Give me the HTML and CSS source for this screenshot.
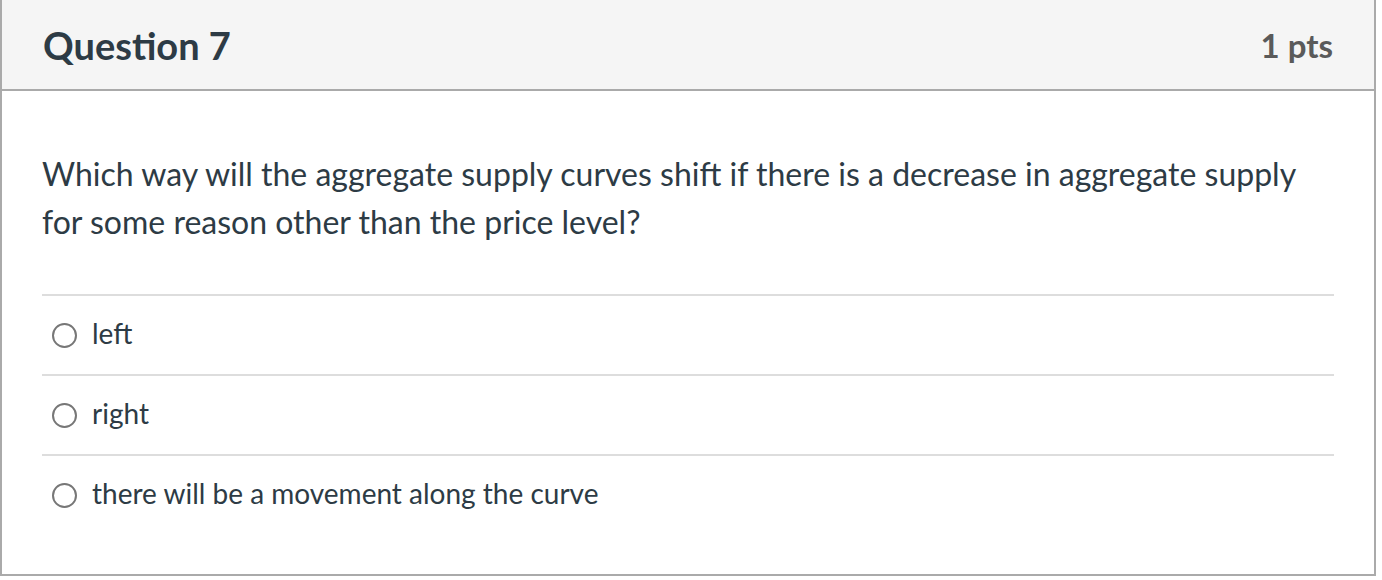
FILE: index.html
```html
<!DOCTYPE html>
<html lang="en">
<head>
<meta charset="utf-8">
<title>Question 7</title>
<link rel="stylesheet" href="styles.css">
</head>
<body>
<div class="question">
  <div class="question-header">
    <h2 class="question-title">Question 7</h2>
    <span class="question-points">1 pts</span>
  </div>
  <div class="question-body">
    <p class="question-text">Which way will the aggregate supply curves shift if there is a decrease in aggregate supply for some reason other than the price level?</p>
    <div class="answers">
      <label class="answer"><span class="radio"></span><span class="answer-label">left</span></label>
      <label class="answer"><span class="radio"></span><span class="answer-label">right</span></label>
      <label class="answer"><span class="radio"></span><span class="answer-label">there will be a movement along the curve</span></label>
    </div>
  </div>
</div>
</body>
</html>
```

FILE: styles.css
```css
html, body {
  margin: 0;
  padding: 0;
  background: #ffffff;
}

body {
  font-family: Lato, "Open Sans", "Liberation Sans", sans-serif;
  color: #2d3b45;
}

.question {
  width: 1376px;
  box-sizing: border-box;
  border: 2px solid #aaaaaa;
  border-top: none;
  background: #ffffff;
}

.question-header {
  height: 91px;
  box-sizing: border-box;
  background: #f5f5f5;
  border-bottom: 2px solid #aaaaaa;
  display: flex;
  align-items: center;
  justify-content: space-between;
  padding: 0 41px 0 41px;
}

.question-title {
  margin: 0;
  font-size: 38px;
  font-weight: 700;
  color: #2d3b45;
}

.question-points {
  font-size: 33px;
  font-weight: 700;
  color: #5a5a5a;
}

.question-body {
  padding: 59px 40px 40px 40px;
}

.question-text {
  margin: 0 0 48px 0;
  font-size: 32px;
  line-height: 48px;
}

.answers {
  display: flex;
  flex-direction: column;
}

.answer {
  display: flex;
  align-items: center;
  height: 80px;
  box-sizing: border-box;
  border-top: 2px solid #dddddd;
  padding-left: 10px;
  padding-bottom: 5px;
  font-size: 28px;
  gap: 15px;
}

.radio {
  width: 25px;
  height: 25px;
  box-sizing: border-box;
  border: 2px solid #777777;
  border-radius: 50%;
  flex-shrink: 0;
  position: relative;
  top: 3px;
}
```
